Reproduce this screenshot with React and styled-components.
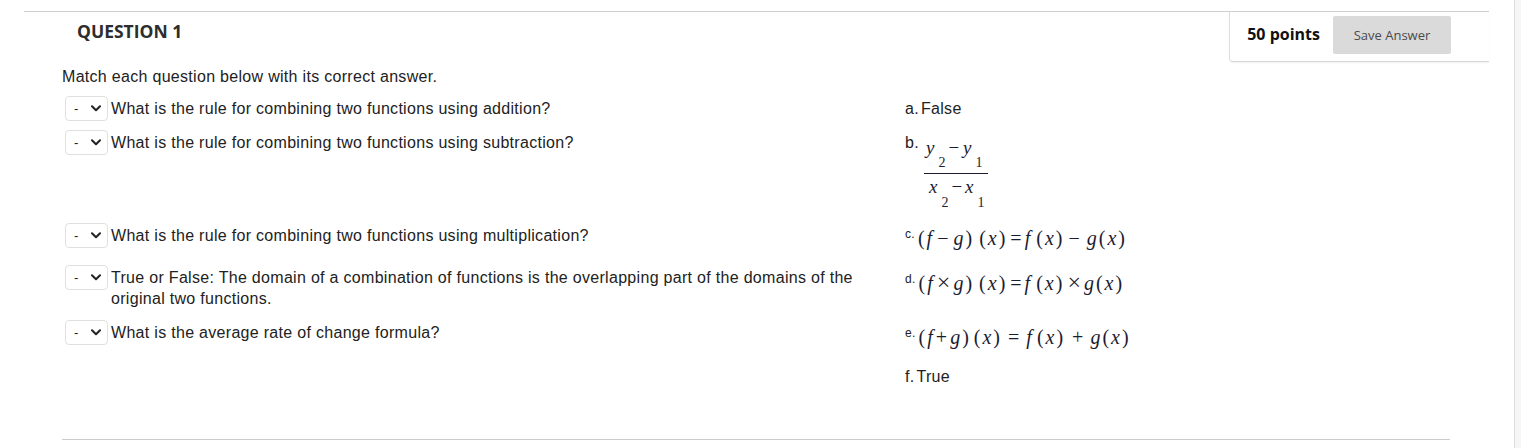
import React from "react";
import styled, { createGlobalStyle } from "styled-components";

const GlobalStyle = createGlobalStyle`
  html, body {
    margin: 0;
    padding: 0;
    background: #fff;
  }
  body {
    font-family: "Liberation Sans", Arial, sans-serif;
    color: #222;
  }
`;

const Page = styled.div`
  display: flex;
  height: 448px;
  overflow: hidden;
`;

const Main = styled.div`
  flex: 1;
  padding: 11px 25px 0 24px;
`;

const Strip = styled.div`
  width: 6px;
  border-left: 1px solid #dcdcdc;
  background: #f6f6f6;
`;

const Panel = styled.div`
  border-top: 1px solid #cfcfcf;
`;

const Header = styled.div`
  display: flex;
  justify-content: space-between;
  align-items: flex-start;
`;

const Title = styled.h2`
  margin: 7px 0 0 53px;
  font-family: "Open Sans", sans-serif;
  font-size: 17.5px;
  line-height: 24px;
  font-weight: 700;
  color: #2d2d2d;
`;

const PointsBox = styled.div`
  display: flex;
  align-items: center;
  gap: 13px;
  padding: 4px 38px 7px 17px;
  border-left: 1px solid #dedede;
  border-bottom: 1px solid #d6d6d6;
  border-bottom-left-radius: 4px;
  box-shadow: 0 1px 2px rgba(0, 0, 0, 0.06);
`;

const Points = styled.span`
  font-family: "Open Sans", sans-serif;
  font-size: 16px;
  line-height: 20px;
  margin-top: -2px;
  font-weight: 700;
  color: #111;
`;

const SaveButton = styled.button`
  width: 118px;
  height: 38px;
  border: none;
  border-radius: 2px;
  background: #dadada;
  font-family: "Open Sans", sans-serif;
  font-size: 13px;
  color: #4a4a4a;
  cursor: pointer;
`;

const Content = styled.div`
  margin-left: 38px;
  width: 1388px;
  height: 374px;
  box-sizing: border-box;
  border-bottom: 1px solid #cccccc;
  letter-spacing: 0.3px;
`;

const Intro = styled.p`
  margin: 4px 0 9px;
  font-size: 16px;
  line-height: 21px;
`;

const MatchGrid = styled.div`
  display: grid;
  grid-template-columns: 843px 1fr;
  grid-template-rows: 34px 93px 42px 55px 44px auto;
`;

const QuestionCell = styled.div`
  display: flex;
  align-items: flex-start;
  gap: 3px;
  padding: 0 25px 0 3px;
`;

const QuestionText = styled.span`
  margin-top: 2px;
  font-size: 16px;
  line-height: 21px;
`;

const Select = styled.span`
  flex: none;
  display: flex;
  align-items: center;
  justify-content: space-between;
  box-sizing: border-box;
  width: 43px;
  height: 25px;
  padding: 0 6px 0 8px;
  border: 1px solid #e0e0e0;
  border-radius: 4px;
  font-size: 13px;
  letter-spacing: 0;
  color: #222;
`;

const AnswerCell = styled.div`
  padding-top: ${(p) => p.$top ?? 2}px;
  font-size: 16px;
  line-height: 21px;
  white-space: nowrap;
`;

const Label = styled.span`
  font-size: ${(p) => (p.$small ? 12 : 16)}px;
  margin-right: ${(p) => (p.$small ? 3 : 2)}px;
  vertical-align: ${(p) => (p.$small ? "1px" : "baseline")};
`;

const Formula = styled.span`
  display: inline-block;
  font-family: "Liberation Serif", "Times New Roman", serif;
  font-size: 20px;
  line-height: 22px;
  letter-spacing: 2px;
  color: #1c1c30;
  vertical-align: -6px;
`;

const Op = styled.span`
  display: inline-block;
  margin: 0 ${(p) => p.$r ?? 3}px 0 ${(p) => p.$l ?? 3}px;
  font-size: ${(p) => p.$scale ?? 1}em;
  line-height: 0;
`;

const Space = styled.span`
  display: inline-block;
  width: ${(p) => p.$w}px;
`;

const Var = styled.i`
  font-style: italic;
`;

const Fraction = styled.span`
  display: inline-flex;
  flex-direction: column;
  align-items: stretch;
  vertical-align: top;
  margin: 6px 0 0 3px;
  font-family: "Liberation Serif", "Times New Roman", serif;
  font-size: 19px;
  letter-spacing: 0;
  color: #1c1c30;
`;

const FracPart = styled.span`
  display: block;
  padding: ${(p) => (p.$bottom ? "3px 0 0 5px" : "0 1px 13px 2px")};
  line-height: 20px;
  border-top: ${(p) => (p.$bottom ? "1px solid #1c1c30" : "none")};
`;

const Sub = styled.span`
  display: inline-block;
  font-size: 14px;
  transform: translateY(${(p) => p.$down ?? 12}px);
  margin: 0 3px 0 4px;
`;

const Chevron = () => (
  <svg width="10" height="7" viewBox="0 0 10 7" fill="none">
    <path d="M1 1.2l4 4 4-4" stroke="#222" strokeWidth="2" strokeLinecap="round" strokeLinejoin="round" />
  </svg>
);

const Dropdown = () => (
  <Select>
    <span>-</span>
    <Chevron />
  </Select>
);

const questions = [
  "What is the rule for combining two functions using addition?",
  "What is the rule for combining two functions using subtraction?",
  "What is the rule for combining two functions using multiplication?",
  "True or False: The domain of a combination of functions is the overlapping part of the domains of the original two functions.",
  "What is the average rate of change formula?",
];

const answers = [
  <AnswerCell key="a">
    <Label>a.</Label>False
  </AnswerCell>,
  <AnswerCell key="b">
    <Label>b.</Label>
    <Fraction>
      <FracPart>
        <Var>y</Var>
        <Sub $down={13}>2</Sub>−<Space $w={4} />
        <Var>y</Var>
        <Sub $down={13}>1</Sub>
      </FracPart>
      <FracPart $bottom>
        <Var>x</Var>
        <Sub $down={14}>2</Sub>−<Space $w={3} />
        <Var>x</Var>
        <Sub $down={14}>1</Sub>
      </FracPart>
    </Fraction>
  </AnswerCell>,
  <AnswerCell key="c" $top={0}>
    <Label $small>c.</Label>
    <Formula>
      (<Var>f</Var>
      <Op>−</Op>
      <Var>g</Var>)<Space $w={5} />(<Var>x</Var>)<Op $r={1}>=</Op>
      <Var>f</Var>
      <Space $w={4} />(<Var>x</Var>)<Op $l={4} $r={5}>−</Op>
      <Var>g</Var>(<Var>x</Var>)
    </Formula>
  </AnswerCell>,
  <AnswerCell key="d" $top={3}>
    <Label $small>d.</Label>
    <Formula>
      (<Var>f</Var>
      <Op $l={2} $r={1} $scale={1.2}>×</Op>
      <Var>g</Var>)<Space $w={5} />(<Var>x</Var>)<Op $r={1}>=</Op>
      <Var>f</Var>
      <Space $w={4} />(<Var>x</Var>)<Op $l={3} $r={1} $scale={1.2}>×</Op>
      <Var>g</Var>(<Var>x</Var>)
    </Formula>
  </AnswerCell>,
  <AnswerCell key="e" $top={2}>
    <Label $small>e.</Label>
    <Formula>
      (<Var>f</Var>
      <Op $l={1} $r={1}>+</Op>
      <Var>g</Var>)<Space $w={3} />(<Var>x</Var>)<Op $l={6} $r={5}>=</Op>
      <Var>f</Var>
      <Space $w={3} />(<Var>x</Var>)<Op $l={7} $r={5}>+</Op>
      <Var>g</Var>(<Var>x</Var>)
    </Formula>
  </AnswerCell>,
  <AnswerCell key="f">
    <Label>f.</Label>True
  </AnswerCell>,
];

export default function App() {
  return (
    <>
      <GlobalStyle />
      <Page>
        <Main>
          <Panel>
            <Header>
              <Title>QUESTION 1</Title>
              <PointsBox>
                <Points>50 points</Points>
                <SaveButton>Save Answer</SaveButton>
              </PointsBox>
            </Header>
            <Content>
              <Intro>Match each question below with its correct answer.</Intro>
              <MatchGrid>
                {answers.map((answer, i) => (
                  <React.Fragment key={i}>
                    <QuestionCell>
                      {questions[i] && (
                        <>
                          <Dropdown />
                          <QuestionText>{questions[i]}</QuestionText>
                        </>
                      )}
                    </QuestionCell>
                    {answer}
                  </React.Fragment>
                ))}
              </MatchGrid>
            </Content>
          </Panel>
        </Main>
        <Strip />
      </Page>
    </>
  );
}
